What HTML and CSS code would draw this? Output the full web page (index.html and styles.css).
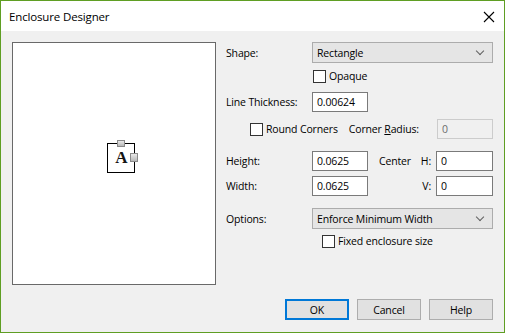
FILE: index.html
```html
<!DOCTYPE HTML>
<html lang="en-US">
	<head>
		<meta charset="UTF-8">
		<title>Enclosure Designer</title>
		<link rel="stylesheet" href="styles.css">
	</head>
	<body>
		<div class="window">
			<div class="titlebar">
				<span class="title">Enclosure Designer</span>
				<svg class="close" width="12" height="12" viewBox="0 0 12 12">
					<path d="M1 1 L11 11 M11 1 L1 11" stroke="#000" stroke-width="1.1" fill="none"/>
				</svg>
			</div>
			<div class="main">
				<div class="preview">
					<div class="glyph">
						<span class="glyph-letter">A</span>
						<span class="handle handle-top"></span>
						<span class="handle handle-right"></span>
					</div>
				</div>
				<div class="form">
					<div class="row row-shape">
						<span class="label">Shape:</span>
						<div class="select">Rectangle<span class="chevron"></span></div>
					</div>
					<div class="row row-opaque">
						<span class="check"></span><span>Opaque</span>
					</div>
					<div class="row row-thick">
						<span class="label">Line Thickness:</span>
						<div class="input">0.00624</div>
					</div>
					<div class="row row-round">
						<span class="check"></span><span>Round Corners</span>
						<span class="radius-label">Corner <u>R</u>adius:</span>
						<div class="input input-small disabled">0</div>
					</div>
					<div class="row row-height">
						<span class="label">Height:</span>
						<div class="input">0.0625</div>
						<span class="center">Center</span>
						<span class="axis">H:</span>
						<div class="input input-small">0</div>
					</div>
					<div class="row row-width">
						<span class="label">Width:</span>
						<div class="input">0.0625</div>
						<span class="axis">V:</span>
						<div class="input input-small">0</div>
					</div>
					<div class="row row-options">
						<span class="label">Options:</span>
						<div class="select">Enforce Minimum Width<span class="chevron"></span></div>
					</div>
					<div class="row row-fixed">
						<span class="check"></span><span>Fixed enclosure size</span>
					</div>
				</div>
			</div>
			<div class="footer">
				<button class="btn btn-default">OK</button>
				<button class="btn">Cancel</button>
				<button class="btn">Help</button>
			</div>
		</div>
	</body>
</html>
```

FILE: styles.css
```css
body {
	margin: 0;
	font-family: "Open Sans", "Noto Sans", sans-serif;
	font-size: 10.5px;
	letter-spacing: -0.15px;
	color: #000;
}
.window {
	width: 505px;
	height: 333px;
	box-sizing: border-box;
	border: 1px solid #5f9e23;
	background: #f0f0f0;
	display: flex;
	flex-direction: column;
}
.titlebar {
	height: 30px;
	background: #fff;
	display: flex;
	align-items: center;
	justify-content: space-between;
	padding: 0 9px 0 8px;
}
.title {
	font-size: 11.5px;
}
.close {
	margin-top: 1px;
}
.main {
	display: flex;
	padding: 11px 0 0 11px;
}
.preview {
	width: 202px;
	height: 241px;
	border: 1px solid #696969;
	background: #fff;
	position: relative;
}
.glyph {
	position: absolute;
	left: 94px;
	top: 100px;
	width: 26px;
	height: 28px;
	border: 1px solid #000;
	background: #fff;
	display: flex;
	align-items: center;
	justify-content: center;
}
.glyph-letter {
	font-family: "Liberation Serif", serif;
	font-weight: bold;
	font-size: 17px;
	letter-spacing: 0;
	color: #141414;
	margin-left: 1px;
}
.handle {
	position: absolute;
	width: 6px;
	height: 5px;
	border: 1px solid #8a8a8a;
	background: linear-gradient(#e8e8e8, #b8b8b8);
}
.handle-top {
	left: 9px;
	top: -4px;
}
.handle-right {
	left: 22px;
	top: 9px;
	height: 7px;
}
.form {
	margin-left: 10px;
	width: 267px;
	display: flex;
	flex-direction: column;
}
.row {
	display: flex;
	align-items: center;
	white-space: nowrap;
}
.label {
	width: 86px;
	flex: none;
}
.row-shape { height: 21px; }
.row-opaque { height: 16px; margin-top: 5px; padding-left: 87px; }
.row-thick { height: 20px; margin-top: 8px; }
.row-round { height: 20px; margin-top: 7px; padding-left: 24px; }
.row-height { height: 20px; margin-top: 12px; }
.row-width { height: 20px; margin-top: 5px; }
.row-options { height: 21px; margin-top: 12px; }
.row-fixed { height: 16px; margin-top: 4px; padding-left: 96px; }
.select {
	flex: 1;
	height: 100%;
	box-sizing: border-box;
	border: 1px solid #acacac;
	background: #e5e5e5;
	padding-left: 4px;
	display: flex;
	align-items: center;
	justify-content: space-between;
}
.chevron {
	width: 5px;
	height: 5px;
	border-right: 1px solid #606060;
	border-bottom: 1px solid #606060;
	transform: rotate(45deg);
	margin: 0 9px 3px 0;
}
.check {
	width: 11px;
	height: 11px;
	border: 1px solid #333;
	background: #fff;
	margin-right: 3px;
	flex: none;
}
.input {
	width: 56px;
	height: 100%;
	box-sizing: border-box;
	border: 1px solid #7a7a7a;
	background: #fff;
	padding-left: 4px;
	display: flex;
	align-items: center;
	flex: none;
}
.input-small {
	width: 57px;
	margin-left: auto;
}
.disabled {
	width: 56px;
	border-color: #cccccc;
	background: #f0f0f0;
	color: #6d6d6d;
}
.radius-label {
	margin-left: auto;
	margin-right: 7px;
}
.center {
	margin-left: 11px;
}
.axis {
	margin-left: auto;
	margin-right: 5px;
}
.axis + .input-small {
	margin-left: 0;
}
.footer {
	display: flex;
	justify-content: flex-end;
	gap: 8px;
	padding: 14px 11px 0 0;
}
.btn {
	width: 64px;
	height: 21px;
	border: 1px solid #adadad;
	background: #e1e1e1;
	font-family: inherit;
	font-size: 10.5px;
	letter-spacing: -0.15px;
	padding: 0;
	color: #000;
}
.btn-default {
	border: 2px solid #0078d7;
}
```
